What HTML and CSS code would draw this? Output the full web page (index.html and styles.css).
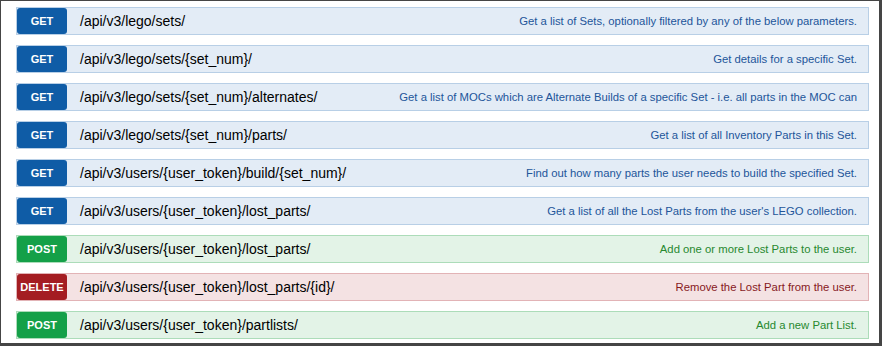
FILE: index.html
```html
<!DOCTYPE html>
<html>
<head>
<meta charset="utf-8">
<link rel="stylesheet" href="styles.css">
</head>
<body>
<div class="frame">
  <div class="op get"><span class="method">GET</span><span class="path">/api/v3/lego/sets/</span><span class="desc">Get a list of Sets, optionally filtered by any of the below parameters.</span></div>
  <div class="op get"><span class="method">GET</span><span class="path">/api/v3/lego/sets/{set_num}/</span><span class="desc">Get details for a specific Set.</span></div>
  <div class="op get"><span class="method">GET</span><span class="path">/api/v3/lego/sets/{set_num}/alternates/</span><span class="desc">Get a list of MOCs which are Alternate Builds of a specific Set - i.e. all parts in the MOC can</span></div>
  <div class="op get"><span class="method">GET</span><span class="path">/api/v3/lego/sets/{set_num}/parts/</span><span class="desc">Get a list of all Inventory Parts in this Set.</span></div>
  <div class="op get"><span class="method">GET</span><span class="path">/api/v3/users/{user_token}/build/{set_num}/</span><span class="desc">Find out how many parts the user needs to build the specified Set.</span></div>
  <div class="op get"><span class="method">GET</span><span class="path">/api/v3/users/{user_token}/lost_parts/</span><span class="desc">Get a list of all the Lost Parts from the user's LEGO collection.</span></div>
  <div class="op post"><span class="method">POST</span><span class="path">/api/v3/users/{user_token}/lost_parts/</span><span class="desc">Add one or more Lost Parts to the user.</span></div>
  <div class="op delete"><span class="method">DELETE</span><span class="path">/api/v3/users/{user_token}/lost_parts/{id}/</span><span class="desc">Remove the Lost Part from the user.</span></div>
  <div class="op post"><span class="method">POST</span><span class="path">/api/v3/users/{user_token}/partlists/</span><span class="desc">Add a new Part List.</span></div>
</div>
</body>
</html>
```
FILE: styles.css
```css
html, body {
  margin: 0;
  padding: 0;
  background: #fff;
}
.frame {
  box-sizing: border-box;
  width: 882px;
  height: 346px;
  border-style: solid;
  border-color: #454545;
  border-width: 1px 3px 3px 1px;
  padding: 6px 10px 0 15px;
  display: flex;
  flex-direction: column;
  gap: 10px;
  font-family: "Liberation Sans", Arial, sans-serif;
  overflow: hidden;
}
.op {
  box-sizing: border-box;
  height: 28px;
  border: 1px solid;
  display: flex;
  align-items: stretch;
  flex-shrink: 0;
}
.method {
  flex: 0 0 50px;
  display: flex;
  align-items: center;
  justify-content: center;
  color: #fff;
  font-weight: bold;
  font-size: 11px;
  border-radius: 3px;
}
.path {
  display: flex;
  align-items: center;
  padding-left: 13px;
  font-size: 14px;
  color: #000;
  white-space: nowrap;
}
.desc {
  flex: 1;
  display: flex;
  align-items: center;
  justify-content: flex-end;
  padding-right: 11px;
  font-size: 11.3px;
  white-space: nowrap;
  overflow: hidden;
}
.get {
  background: #e3ecf6;
  border-color: #b8cfe6;
}
.get .method { background: #0f5ca6; }
.get .desc { color: #22559a; }
.post {
  background: #e3f3e7;
  border-color: #acdcb9;
}
.post .method { background: #14a048; }
.post .desc { color: #27892f; }
.delete {
  background: #f4e2e3;
  border-color: #e2b3b6;
}
.delete .method { background: #a41d22; }
.delete .desc { color: #87191d; }
```
